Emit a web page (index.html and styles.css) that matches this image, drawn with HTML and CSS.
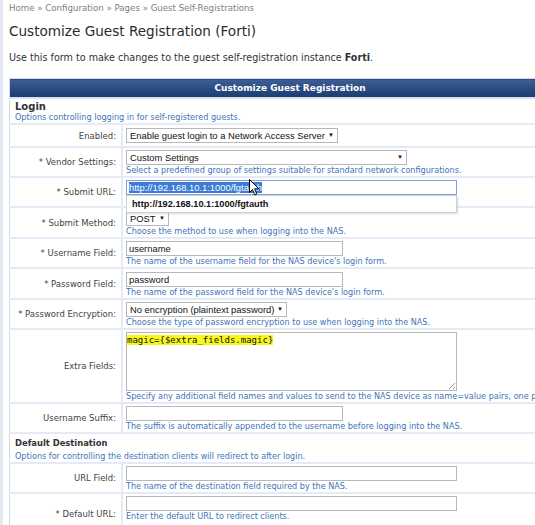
FILE: index.html
```html
<!DOCTYPE html>
<html>
<head>
    <title>Customize Guest Registration</title>
    <link rel="stylesheet" href="styles.css">
</head>
<body>
    <div class="page">
        <div class="crumbs">
            <a href="#">Home</a> &raquo; <a href="#">Configuration</a> &raquo; <a href="#">Pages</a> &raquo; Guest Self-Registrations
        </div>
        <h1>Customize Guest Registration (Forti)</h1>
        <p class="intro">Use this form to make changes to the guest self-registration instance <b>Forti</b>.</p>

        <table class="form-table">
            <tr>
                <th colspan="2" class="table-head">Customize Guest Registration</th>
            </tr>
            <tr>
                <td colspan="2" class="section">
                    <div class="section-title big">Login</div>
                    <div class="hint">Options controlling logging in for self-registered guests.</div>
                </td>
            </tr>
            <tr>
                <td class="label">Enabled:</td>
                <td class="field solo">
                    <div class="select w-enabled">Enable guest login to a Network Access Server<span class="arrow">&#9660;</span></div>
                </td>
            </tr>
            <tr>
                <td class="label">* Vendor Settings:</td>
                <td class="field">
                    <div class="select w-long">Custom Settings<span class="arrow">&#9660;</span></div>
                    <div class="hint">Select a predefined group of settings suitable for standard network configurations.</div>
                </td>
            </tr>
            <tr>
                <td class="label">* Submit URL:</td>
                <td class="field">
                    <div class="input w-wide focus"><span class="selected">http://192.168.10.1:1000/fgtauth</span></div>
                    <div class="hint-space"></div>
                    <div class="suggest">http://192.168.10.1:1000/fgtauth</div>
                    <svg class="cursor" width="11" height="17" viewBox="0 0 11 17">
                        <path d="M0.5 0.5 L0.5 13.5 L3.5 10.5 L5.8 15.8 L7.8 15 L5.6 9.8 L9.8 9.8 Z" fill="#fff" stroke="#000" stroke-width="1"/>
                    </svg>
                </td>
            </tr>
            <tr>
                <td class="label">* Submit Method:</td>
                <td class="field tall">
                    <div class="select w-post">POST<span class="arrow">&#9660;</span></div>
                    <div class="hint">Choose the method to use when logging into the NAS.</div>
                </td>
            </tr>
            <tr>
                <td class="label">* Username Field:</td>
                <td class="field">
                    <div class="input w-mid">username</div>
                    <div class="hint">The name of the username field for the NAS device's login form.</div>
                </td>
            </tr>
            <tr>
                <td class="label">* Password Field:</td>
                <td class="field tall">
                    <div class="input w-mid">password</div>
                    <div class="hint">The name of the password field for the NAS device's login form.</div>
                </td>
            </tr>
            <tr>
                <td class="label">* Password Encryption:</td>
                <td class="field">
                    <div class="select w-enc">No encryption (plaintext password)<span class="arrow">&#9660;</span></div>
                    <div class="hint">Choose the type of password encryption to use when logging into the NAS.</div>
                </td>
            </tr>
            <tr>
                <td class="label">Extra Fields:</td>
                <td class="field">
                    <div class="textarea w-wide"><span class="marked">magic={$extra_fields.magic}</span><span class="grip"></span></div>
                    <div class="hint">Specify any additional field names and values to send to the NAS device as name=value pairs, one per line.</div>
                </td>
            </tr>
            <tr>
                <td class="label">Username Suffix:</td>
                <td class="field">
                    <div class="input w-mid"></div>
                    <div class="hint">The suffix is automatically appended to the username before logging into the NAS.</div>
                </td>
            </tr>
            <tr>
                <td colspan="2" class="section">
                    <div class="section-title">Default Destination</div>
                    <div class="hint">Options for controlling the destination clients will redirect to after login.</div>
                </td>
            </tr>
            <tr>
                <td class="label">URL Field:</td>
                <td class="field">
                    <div class="input w-wide"></div>
                    <div class="hint">The name of the destination field required by the NAS.</div>
                </td>
            </tr>
            <tr>
                <td class="label">* Default URL:</td>
                <td class="field last">
                    <div class="input w-wide"></div>
                    <div class="hint">Enter the default URL to redirect clients.</div>
                </td>
            </tr>
        </table>
    </div>
</body>
</html>
```

FILE: styles.css
```css
body {
    margin: 0;
    font-family: 'DejaVu Sans', Verdana, sans-serif;
    color: #333;
    background: #fff;
}

.page {
    border-left: 3px solid #e3e9f3;
    padding: 3px 0 0 6px;
    height: 522px;
    overflow: hidden;
}

.crumbs {
    font-size: 8.65px;
    line-height: 11px;
    color: #808080;
}

.crumbs a {
    color: #808080;
    text-decoration: none;
}

h1 {
    font-size: 13.6px;
    font-weight: normal;
    color: #2b2b2b;
    margin: 8px 0 0;
    line-height: 18px;
}

.intro {
    font-size: 9.6px;
    line-height: 12px;
    margin: 12px 0 0;
    color: #333;
}

.form-table {
    width: 562px;
    border-collapse: collapse;
    margin-top: 14px;
    border: 1px solid #cfdbec;
}

.table-head {
    background: linear-gradient(#3c5f95, #1d3b70);
    color: #fff;
    font-size: 9px;
    font-weight: bold;
    height: 18px;
    padding: 0;
    text-align: center;
    border-bottom: 2px solid #d7e1f0;
}

td {
    border-bottom: 2px solid #e4ebf6;
    padding: 0;
}

.section {
    padding: 2px 5px 1px;
}

.section-title {
    font-size: 8.4px;
    font-weight: bold;
    line-height: 15px;
    color: #333;
}

.section-title.big {
    font-size: 10px;
    line-height: 11px;
}

.label {
    width: 106px;
    text-align: right;
    padding-right: 5px;
    font-size: 8.5px;
    color: #444;
    border-right: 2px solid #e4ebf6;
    white-space: nowrap;
}

.field {
    padding: 2px 4px 1px 3px;
    position: relative;
}

.field.solo {
    padding-top: 3px;
    padding-bottom: 3px;
}

.field.tall {
    padding-top: 3px;
}

.field.last {
    padding-bottom: 13px;
}

.hint {
    font-size: 8.1px;
    line-height: 10px;
    color: #4274b8;
    white-space: nowrap;
}

.hint-space {
    height: 10px;
}

.input, .select, .textarea {
    box-sizing: border-box;
    height: 15px;
    border: 1px solid #b8b8b8;
    background: #fff;
    font-family: 'Liberation Sans', Arial, sans-serif;
    font-size: 9.4px;
    line-height: 13px;
    padding: 0 2px;
    color: #111;
    white-space: nowrap;
}

.select {
    position: relative;
    padding-left: 3px;
}

.arrow {
    position: absolute;
    right: 3px;
    top: 0;
    font-size: 6px;
}

.w-enabled { width: 212px; }
.w-long { width: 281px; }
.w-post { width: 43px; }
.w-enc { width: 161px; }
.w-mid { width: 217px; }
.w-wide { width: 331px; }

.input.focus {
    border-color: #7ea3d8;
}

.selected {
    background: #3a7bd5;
    color: #fff;
}

.textarea {
    height: 59px;
    position: relative;
    font-family: 'DejaVu Sans Mono', 'Liberation Mono', monospace;
    font-size: 9px;
    line-height: 12px;
    padding: 1px 1px 0 0;
}

.marked {
    background: #f7f71c;
}

.grip {
    position: absolute;
    right: 1px;
    bottom: 1px;
    width: 6px;
    height: 6px;
    background: linear-gradient(135deg, transparent 45%, #999 45%, #999 55%, transparent 55%, transparent 75%, #999 75%, #999 85%, transparent 85%);
}

.suggest {
    position: absolute;
    left: 3px;
    top: 17px;
    width: 331px;
    height: 18px;
    box-sizing: border-box;
    background: #fff;
    border: 1px solid #d0d0d0;
    box-shadow: 1px 1px 2px rgba(0,0,0,0.15);
    font-family: 'Liberation Sans', Arial, sans-serif;
    font-size: 9.2px;
    font-weight: bold;
    line-height: 16px;
    padding-left: 5px;
    color: #111;
    z-index: 2;
}

.cursor {
    position: absolute;
    left: 126px;
    top: 1px;
    z-index: 3;
}
```
